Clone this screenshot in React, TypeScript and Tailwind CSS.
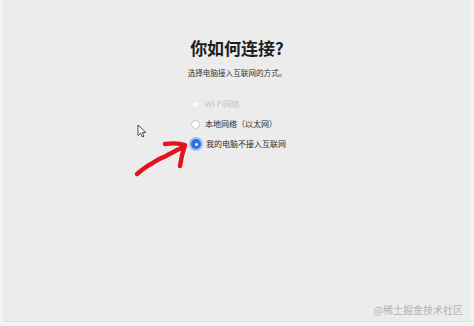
import React from "react";

const cjk = { fontFamily: '"Noto Sans CJK SC", "Noto Sans", sans-serif' };

function Radio({ state }: { state: "disabled" | "off" | "on" }) {
  if (state === "on") {
    return (
      <span className="w-[10px] h-[10px] rounded-full bg-[#2f6fe0] flex items-center justify-center shadow-[0_0_0_2px_rgba(80,140,240,0.45)]">
        <span className="w-[3px] h-[3px] rounded-full bg-white" />
      </span>
    );
  }
  return (
    <span
      className={
        state === "disabled"
          ? "w-[9px] h-[9px] rounded-full bg-[#f6f6f6] border border-[#e2e2e2]"
          : "w-[9px] h-[9px] rounded-full bg-white border border-[#c8c8c8]"
      }
    />
  );
}

export default function App() {
  const rows: { label: string; state: "disabled" | "off" | "on" }[] = [
    { label: "Wi-Fi网络", state: "disabled" },
    { label: "本地网络（以太网）", state: "off" },
    { label: "我的电脑不接入互联网", state: "on" },
  ];
  return (
    <div className="relative w-[474px] h-[326px] overflow-hidden bg-[#f3f3f3]" style={cjk}>
      <div className="w-[468px] h-[322px] ml-[3px] bg-[#ececec] flex flex-col items-center pt-[38px] border-b border-[#e0e0e0]">
        <h1 className="text-[17px] leading-[20px] font-bold text-[#1e1e1e]">你如何连接?</h1>
        <p className="mt-[10px] text-[7.6px] leading-[10px] text-[#333]">选择电脑接入互联网的方式。</p>
        <div className="mt-[16px] w-full pl-[188px] flex flex-col">
          {rows.map((r) => (
            <div key={r.label} className="h-[20px] flex items-center gap-[5px]">
              <Radio state={r.state} />
              <span
                className={
                  r.state === "disabled"
                    ? "text-[8px] leading-[10px] text-[#c4c4c4]"
                    : "text-[8px] leading-[10px] text-[#2a2a2a]"
                }
              >
                {r.label}
              </span>
            </div>
          ))}
        </div>
      </div>

      {/* mouse cursor */}
      <svg className="absolute left-[137px] top-[124px]" width="10" height="14" viewBox="0 0 10 14">
        <path d="M1 1 L1 11.5 L3.6 9.2 L5.4 13 L7 12.3 L5.3 8.6 L8.8 8.4 Z" fill="#fff" stroke="#333" strokeWidth="0.9" strokeLinejoin="round" />
      </svg>

      {/* red hand-drawn arrow */}
      <svg className="absolute left-0 top-0" width="474" height="326" viewBox="0 0 474 326">
        <path
          d="M137 174 C143 169 147 166 151 164 C156 161 160 158 164 157 C170 154 177 150 185 146"
          fill="none"
          stroke="#e3131b"
          strokeWidth="4.4"
          strokeLinecap="round"
          strokeLinejoin="round"
        />
        <path
          d="M165 144 C172 143 179 143 185 145 C183 151 181 158 180 166"
          fill="none"
          stroke="#e3131b"
          strokeWidth="4.4"
          strokeLinecap="round"
          strokeLinejoin="round"
        />
      </svg>

      {/* watermark */}
      <div className="absolute right-[11px] top-[303px] text-[10px] leading-[14px] text-[#b3b3b3]">@稀土掘金技术社区</div>
    </div>
  );
}
